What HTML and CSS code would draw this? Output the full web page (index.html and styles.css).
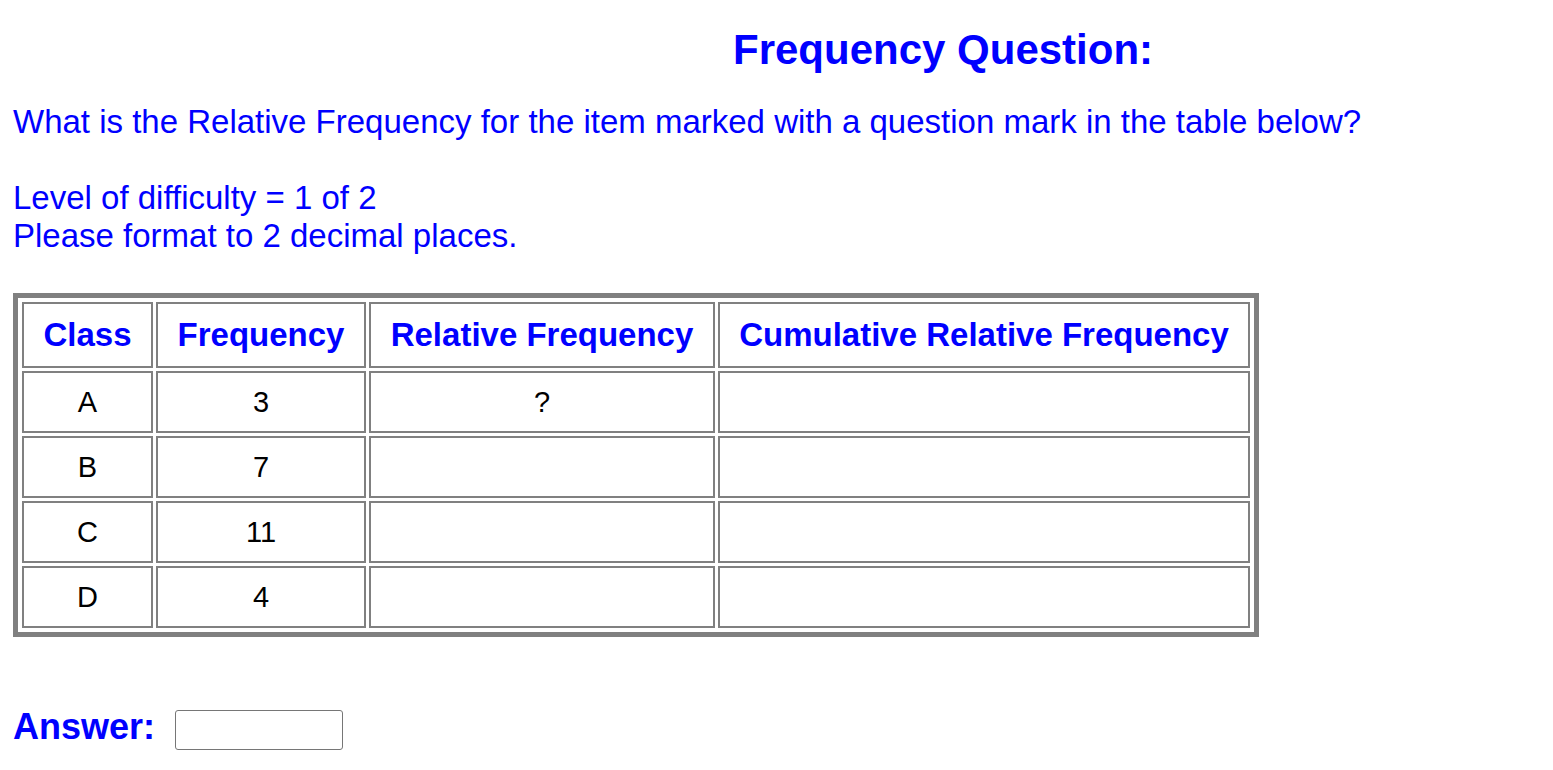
FILE: index.html
```html
<!DOCTYPE html>
<html>
<head>
<meta charset="utf-8">
<title>Frequency Question</title>
<link rel="stylesheet" href="styles.css">
</head>
<body>
<div class="page">
  <h1 class="title">Frequency Question:</h1>
  <p class="question">What is the Relative Frequency for the item marked with a question mark in the table below?</p>
  <p class="info">Level of difficulty = 1 of 2<br>Please format to 2 decimal places.</p>
  <table class="freq">
    <tr>
      <th class="c-class">Class</th>
      <th class="c-freq">Frequency</th>
      <th class="c-rel">Relative Frequency</th>
      <th class="c-cum">Cumulative Relative Frequency</th>
    </tr>
    <tr><td>A</td><td>3</td><td>?</td><td></td></tr>
    <tr><td>B</td><td>7</td><td></td><td></td></tr>
    <tr><td>C</td><td>11</td><td></td><td></td></tr>
    <tr><td>D</td><td>4</td><td></td><td></td></tr>
  </table>
  <div class="answer">
    <label class="answer-label" for="ans">Answer:</label>
    <input class="answer-input" id="ans" type="text">
  </div>
</div>
</body>
</html>
```
FILE: styles.css
```css
html, body {
  margin: 0;
  padding: 0;
  background: #fff;
}
.page {
  padding: 27px 13px 0 13px;
  font-family: "Liberation Sans", Arial, sans-serif;
  color: #0000ff;
}
.title {
  margin: 0 0 30px 720px;
  font-size: 42px;
  line-height: 46px;
  font-weight: bold;
}
.question {
  margin: 0 0 38px 0;
  font-size: 33px;
  line-height: 38px;
}
.info {
  margin: 0 0 38px 0;
  font-size: 33px;
  line-height: 38px;
}
.freq {
  border: 5px solid #808080;
  border-spacing: 3px;
  padding: 1px;
  border-collapse: separate;
}
.freq th, .freq td {
  border: 2px solid #808080;
  text-align: center;
  padding: 0;
}
.freq th {
  height: 62px;
  font-size: 33px;
  font-weight: bold;
  color: #0000ff;
}
.freq td {
  height: 58px;
  font-size: 29px;
  color: #000;
}
.c-class { width: 127px; }
.c-freq { width: 206px; }
.c-rel { width: 342px; }
.c-cum { width: 528px; }
.answer {
  margin-top: 70px;
  display: flex;
  align-items: center;
  gap: 20px;
}
.answer-label {
  font-size: 36px;
  font-weight: bold;
  line-height: 40px;
  padding-bottom: 6px;
}
.answer-input {
  width: 168px;
  height: 40px;
  box-sizing: border-box;
  border: 1px solid #767676;
  border-radius: 3px;
  margin: 0;
  padding: 0 4px;
}
```
